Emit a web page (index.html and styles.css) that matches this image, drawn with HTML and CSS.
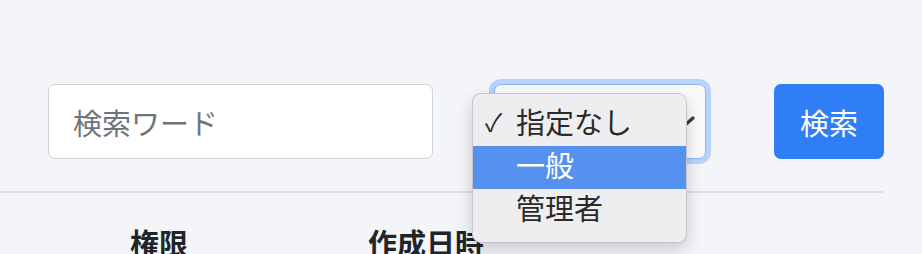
FILE: index.html
```html
<!DOCTYPE html>
<html lang="ja">
<head>
  <meta charset="UTF-8">
  <meta name="viewport" content="width=device-width, initial-scale=1.0">
  <title>ユーザー検索</title>
  <link rel="stylesheet" href="styles.css">
</head>
<body>

  <div class="page">
    <form class="search-row">
      <input type="text" class="search-input" placeholder="検索ワード">
      <div class="select-wrap">
        <div class="fake-select">
          <span class="select-value">指定なし</span>
          <svg class="select-arrow" width="22" height="14" viewBox="0 0 22 14">
            <polyline points="2,3 11,11 20,3" fill="none" stroke="#343a40" stroke-width="3.2" stroke-linecap="round" stroke-linejoin="round"/>
          </svg>
        </div>
      </div>
      <button type="button" class="search-button">検索</button>
    </form>

    <hr class="divider">

    <div class="table-head">
      <div class="col col-role">権限</div>
      <div class="col col-date">作成日時</div>
    </div>
  </div>

  <!-- open dropdown of the role select -->
  <ul class="dropdown">
    <li class="option selected"><span class="check">✓</span>指定なし</li>
    <li class="option active">一般</li>
    <li class="option">管理者</li>
  </ul>

</body>
</html>
```

FILE: styles.css
```css
body {
  margin: 0;
  font-family: "Noto Sans CJK JP", "Noto Sans", sans-serif;
  background-color: #f4f5f9;
  color: #212529;
  height: 254px;
  overflow: hidden;
}
.page {
  padding: 84px 38px 0 48px;
}
.search-row {
  display: flex;
  align-items: stretch;
  height: 75px;
}
.search-input {
  width: 385px;
  box-sizing: border-box;
  border: 1.5px solid #ced4da;
  border-radius: 7px;
  background-color: #fff;
  padding: 0 24px;
  font-family: inherit;
  font-size: 29px;
  color: #212529;
  outline: none;
}
.search-input::placeholder {
  color: #6c757d;
}
.select-wrap {
  margin-left: 61px;
  width: 212px;
}
.fake-select {
  height: 100%;
  box-sizing: border-box;
  border: 1.5px solid #86b7fe;
  border-radius: 7px;
  background-color: #fafafb;
  box-shadow: 0 0 0 5px rgba(13, 110, 253, 0.25);
  display: flex;
  align-items: center;
  padding: 0 12px 0 24px;
  font-size: 29px;
}
.select-value {
  flex: 1;
}
.select-arrow {
  margin-right: -2px;
}
.search-button {
  margin-left: 68px;
  width: 110px;
  border: none;
  border-radius: 7px;
  background-color: #2f7ef6;
  color: #fff;
  font-family: inherit;
  font-size: 29px;
  padding: 0;
}
.divider {
  margin: 32px 0 0 -48px;
  border: none;
  border-top: 2px solid #dfe1e6;
}
.table-head {
  display: flex;
  padding-top: 28px;
  font-size: 29px;
  font-weight: bold;
}
.col-role {
  margin-left: 82px;
  width: 238px;
}
.dropdown {
  position: absolute;
  left: 472px;
  top: 93px;
  width: 215px;
  box-sizing: border-box;
  margin: 0;
  padding: 9px 0 10px;
  list-style: none;
  background-color: #eeeef0;
  border: 1px solid #c6c6c9;
  border-radius: 9px;
  box-shadow: 0 6px 16px rgba(0, 0, 0, 0.18);
}
.option {
  position: relative;
  height: 43px;
  line-height: 36px;
  padding-left: 43px;
  font-size: 29px;
  color: #2a2a2a;
}
.option.active {
  background-color: #5591ee;
  color: #fff;
}
.check {
  position: absolute;
  left: 12px;
  font-size: 25px;
}
```
